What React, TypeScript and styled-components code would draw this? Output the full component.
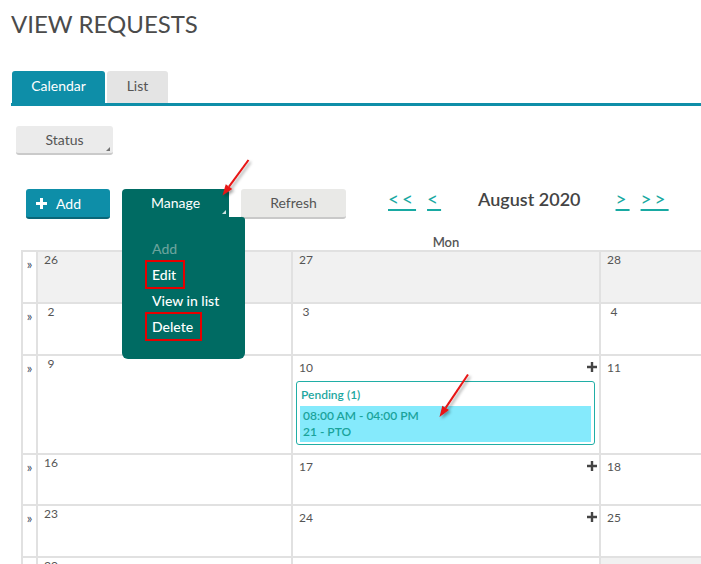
import React from 'react';
import styled, { createGlobalStyle } from 'styled-components';

const Global = createGlobalStyle`
  html, body { margin: 0; padding: 0; overflow: hidden; background: #fff; }
  body { font-family: Lato, "Open Sans", "Liberation Sans", sans-serif; color: #4b4b4b; }
  * { box-sizing: border-box; }
`;

const Page = styled.div`
  position: relative;
  width: 701px;
  height: 564px;
  overflow: hidden;
  padding-left: 11px;
`;

const Title = styled.h1`
  margin: 7px 0 0;
  font-size: 24px;
  line-height: 33px;
  font-weight: 400;
  color: #4b4b4b;
`;

const TabBar = styled.div`
  display: flex;
  gap: 2px;
  margin-top: 31px;
  padding-left: 1px;
  border-bottom: 3px solid #0e8ea8;
`;

const Tab = styled.div<{ $active?: boolean; $w: number }>`
  width: ${p => p.$w}px;
  height: 32px;
  line-height: 30px;
  text-align: center;
  font-size: 14px;
  border-radius: 3px 3px 0 0;
  background: ${p => (p.$active ? '#0e8ea8' : '#e4e4e4')};
  color: ${p => (p.$active ? '#fff' : '#555')};
`;

const GripButton = styled.div`
  position: relative;
  &::after {
    content: '';
    position: absolute;
    right: 3px;
    bottom: 3px;
    width: 0;
    height: 0;
    border-left: 4px solid transparent;
    border-bottom: 4px solid currentColor;
    opacity: 0.8;
  }
`;

const StatusButton = styled(GripButton)`
  margin: 20px 0 0 5px;
  width: 97px;
  height: 29px;
  line-height: 27px;
  text-align: center;
  font-size: 14px;
  color: #555;
  background: #ebebeb;
  border-bottom: 2px solid #cacaca;
  border-radius: 3px;
  &::after { bottom: 2px; }
`;

const Toolbar = styled.div`
  display: flex;
  align-items: flex-start;
  gap: 12px;
  margin-top: 34px;
  padding-left: 15px;
  height: 30px;
`;

const AddButton = styled.div`
  width: 84px;
  height: 30px;
  display: flex;
  align-items: center;
  gap: 9px;
  padding: 0 0 0 10px;
  background: #0e8ea8;
  border-bottom: 2px solid #0a6678;
  border-radius: 3px;
  color: #fff;
  font-size: 14px;
`;

const ManageWrap = styled.div`
  position: relative;
  width: 107px;
  height: 28px;
  z-index: 3;
`;

const ManageButton = styled(GripButton)`
  height: 28px;
  line-height: 28px;
  text-align: center;
  font-size: 14px;
  color: #fff;
  background: #006b63;
  border-radius: 4px 4px 0 0;
`;

const Menu = styled.div`
  position: absolute;
  top: 28px;
  left: 0;
  width: 123px;
  padding: 19px 0 19px 30px;
  background: #006b63;
  border-radius: 0 3px 6px 6px;
`;

const MenuItem = styled.div<{ $disabled?: boolean }>`
  height: 26px;
  line-height: 26px;
  font-size: 14px;
  font-weight: 500;
  color: ${p => (p.$disabled ? '#6aa39c' : '#fff')};
  white-space: nowrap;
`;

const MenuLabel = styled.span<{ $marked?: boolean }>`
  position: relative;
  &::after {
    content: '';
    display: ${p => (p.$marked ? 'block' : 'none')};
    position: absolute;
    inset: -6px -9px -6px -7px;
    border: 2px solid #e60000;
  }
`;

const RefreshButton = styled.div`
  width: 105px;
  height: 30px;
  line-height: 28px;
  text-align: center;
  font-size: 14px;
  color: #555;
  background: #e9e9e7;
  border-bottom: 2px solid #c9c9c9;
  border-radius: 3px;
`;

const Nav = styled.div`
  display: flex;
  align-items: flex-start;
  height: 24px;
  margin: -2px 0 0 30px;
`;

const NavLink = styled.a<{ $gap?: number }>`
  font-size: 19px;
  line-height: 24px;
  letter-spacing: 3px;
  color: #18a9a2;
  text-decoration: underline;
  text-decoration-thickness: 2px;
  text-underline-offset: 3px;
  margin-left: ${p => p.$gap ?? 0}px;
  cursor: pointer;
`;

const Month = styled.div`
  font-size: 18px;
  line-height: 24px;
  font-weight: 600;
  color: #444;
  margin: 0 35px 0 37px;
`;

const Calendar = styled.div`
  margin: 15px 0 0 10px;
  width: max-content;
`;

const cols = '13px 253px 306px 306px';

const WeekHeader = styled.div`
  display: grid;
  grid-template-columns: ${cols};
  column-gap: 2px;
  padding-left: 2px;
  height: 16px;
`;

const WeekDay = styled.div`
  text-align: center;
  font-size: 13px;
  line-height: 16px;
  font-weight: 600;
  color: #555;
`;

const Grid = styled.div`
  display: grid;
  grid-template-columns: ${cols};
  grid-template-rows: 50px 50px 97px 49px 50px 50px;
  gap: 2px;
  padding: 2px 0 0 2px;
  background: #e1e1e1;
`;

const RowMark = styled.div`
  background: #fff;
  text-align: center;
  padding-top: 5px;
  font-size: 13px;
  line-height: 14px;
  color: #4a5266;
`;

const DayCell = styled.div<{ $gray?: boolean }>`
  background: ${p => (p.$gray ? '#f1f1f1' : '#fff')};
  overflow: hidden;
`;

const DayHead = styled.div<{ $shift?: boolean }>`
  display: flex;
  justify-content: space-between;
  align-items: flex-start;
  height: ${p => (p.$shift ? 24 : 20)}px;
`;

const DayNum = styled.div<{ $shift?: boolean }>`
  width: 14px;
  margin-left: 6px;
  padding-top: ${p => (p.$shift ? 5 : 1)}px;
  text-align: center;
  font-size: 12px;
  line-height: 14px;
  color: #555;
`;

const PlusIcon = styled.svg`
  margin: 6px 2px 0 0;
  flex: none;
`;

const EventBox = styled.div`
  margin: 1px 4px 0 3px;
  border: 1px solid #20aea6;
  border-radius: 3px;
  padding: 5px 3px 2px 3px;
`;

const EventTitle = styled.div`
  padding-left: 1px;
  font-size: 12px;
  line-height: 16px;
  font-weight: 600;
  color: #1ea7a0;
`;

const EventBody = styled.div`
  margin-top: 3px;
  padding: 2px 3px;
  background: #85eafc;
  font-size: 12px;
  line-height: 16px;
  font-weight: 600;
  color: #1aa39b;
`;

const Annotations = styled.svg`
  position: absolute;
  left: 0;
  top: 0;
  width: 701px;
  height: 564px;
  pointer-events: none;
  z-index: 10;
`;

const Plus = ({ color = '#444', size = 10, w = 2.4 }: { color?: string; size?: number; w?: number }) => (
  <PlusIcon width={size} height={size} viewBox="0 0 10 10">
    <path d="M5 0V10M0 5H10" stroke={color} strokeWidth={w} fill="none" />
  </PlusIcon>
);

type Day = { n: number; gray?: boolean };
type Row = { days: Day[]; shift: boolean; event?: boolean };

const rows: Row[] = [
  { days: [{ n: 26, gray: true }, { n: 27, gray: true }, { n: 28, gray: true }], shift: false },
  { days: [{ n: 2 }, { n: 3 }, { n: 4 }], shift: false },
  { days: [{ n: 9 }, { n: 10 }, { n: 11 }], shift: true, event: true },
  { days: [{ n: 16 }, { n: 17 }, { n: 18 }], shift: true },
  { days: [{ n: 23 }, { n: 24 }, { n: 25 }], shift: true },
  { days: [{ n: 30 }, { n: 31 }, { n: 1, gray: true }], shift: true },
];

const Arrow = ({ tail, tip }: { tail: [number, number]; tip: [number, number] }) => {
  const dx = tip[0] - tail[0];
  const dy = tip[1] - tail[1];
  const len = Math.hypot(dx, dy);
  const ux = dx / len;
  const uy = dy / len;
  const px = -uy;
  const py = ux;
  const bx = tip[0] - 11 * ux;
  const by = tip[1] - 11 * uy;
  const pts = `${tip[0]},${tip[1]} ${bx + 4 * px},${by + 4 * py} ${bx - 4 * px},${by - 4 * py}`;
  return (
    <g filter="url(#arrowShadow)">
      <line x1={tail[0]} y1={tail[1]} x2={bx} y2={by} stroke="#e81313" strokeWidth={2} />
      <polygon points={pts} fill="#e81313" />
    </g>
  );
};

export default function App() {
  return (
    <>
      <Global />
      <Page>
        <Title>VIEW REQUESTS</Title>
        <TabBar>
          <Tab $active $w={93}>Calendar</Tab>
          <Tab $w={61}>List</Tab>
        </TabBar>
        <StatusButton>Status</StatusButton>
        <Toolbar>
          <AddButton>
            <svg width="11" height="11" viewBox="0 0 11 11">
              <path d="M5.5 0V11M0 5.5H11" stroke="#fff" strokeWidth="3" fill="none" />
            </svg>
            <span>Add</span>
          </AddButton>
          <ManageWrap>
            <ManageButton>Manage</ManageButton>
            <Menu>
              <MenuItem $disabled><MenuLabel>Add</MenuLabel></MenuItem>
              <MenuItem><MenuLabel $marked>Edit</MenuLabel></MenuItem>
              <MenuItem><MenuLabel>View in list</MenuLabel></MenuItem>
              <MenuItem><MenuLabel $marked>Delete</MenuLabel></MenuItem>
            </Menu>
          </ManageWrap>
          <RefreshButton>Refresh</RefreshButton>
          <Nav>
            <NavLink>&lt;&lt;</NavLink>
            <NavLink $gap={11}>&lt;</NavLink>
            <Month>August 2020</Month>
            <NavLink>&gt;</NavLink>
            <NavLink $gap={11}>&gt;&gt;</NavLink>
          </Nav>
        </Toolbar>
        <Calendar>
          <WeekHeader>
            <div />
            <WeekDay>Sun</WeekDay>
            <WeekDay>Mon</WeekDay>
            <WeekDay>Tue</WeekDay>
          </WeekHeader>
          <Grid>
            {rows.map((row, ri) => (
              <React.Fragment key={ri}>
                <RowMark>»</RowMark>
                {row.days.map((d, ci) => {
                  const shift = row.shift && ci > 0;
                  return (
                    <DayCell key={ci} $gray={d.gray}>
                      <DayHead $shift={shift}>
                        <DayNum $shift={shift}>{d.n}</DayNum>
                        {shift && <Plus />}
                      </DayHead>
                      {row.event && ci === 1 && (
                        <EventBox>
                          <EventTitle>Pending (1)</EventTitle>
                          <EventBody>
                            <div>08:00 AM - 04:00 PM</div>
                            <div>21 - PTO</div>
                          </EventBody>
                        </EventBox>
                      )}
                    </DayCell>
                  );
                })}
              </React.Fragment>
            ))}
          </Grid>
        </Calendar>
        <Annotations viewBox="0 0 701 564">
          <defs>
            <filter id="arrowShadow" x="-50%" y="-50%" width="200%" height="200%">
              <feDropShadow dx="2" dy="2" stdDeviation="1.5" floodColor="#000" floodOpacity="0.35" />
            </filter>
          </defs>
          <Arrow tail={[248.5, 160]} tip={[222.5, 195.5]} />
          <Arrow tail={[468, 374.5]} tip={[439.5, 417]} />
        </Annotations>
      </Page>
    </>
  );
}
